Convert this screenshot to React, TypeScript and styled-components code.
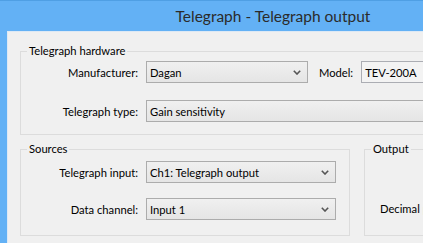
import React from "react";
import styled, {createGlobalStyle} from "styled-components";

const GlobalStyle = createGlobalStyle`
  html, body {
    margin: 0;
    padding: 0;
    background: #63b1f5;
  }
  body {
    font-family: Lato, "Liberation Sans", sans-serif;
    font-size: 11.2px;
    color: #000;
  }
`

const Viewport = styled.div`
  width: 423px;
  height: 243px;
  overflow: hidden;
`

const Window = styled.div`
  width: 546px;
  height: 420px;
  box-sizing: border-box;
  display: flex;
  flex-direction: column;
  padding: 0 7px 7px;
  background: #63b1f5;
  border-top: 1px solid #4f9fe4;
`

const TitleBar = styled.div`
  height: 30px;
  display: flex;
  align-items: center;
  justify-content: center;
  font-size: 15.5px;
  color: #2b2b2b;
`

const Client = styled.div`
  flex: 1;
  display: flex;
  flex-direction: column;
  gap: 7px;
  padding: 12px 12px 0;
  background: #f0f0f0;
  border-top: 1px solid #dde9f5;
  border-left: 1px solid #dde9f5;
`

const Group = styled.fieldset<{ $width?: number; $grow?: boolean }>`
  margin: 0;
  padding: 0;
  min-width: 0;
  border: 1px solid #dcdcdc;
  box-sizing: border-box;
  flex: ${p => p.$grow ? 1 : 'none'};
  ${p => p.$width ? `width: ${p.$width}px;` : ``}
`

const Caption = styled.legend`
  margin-left: 6px;
  padding: 0 2px;
  line-height: 14px;
`

const Form = styled.div<{ $gap: number; $top: number; $bottom: number }>`
  display: grid;
  grid-template-columns: 117px 1fr;
  column-gap: 8px;
  row-gap: ${p => p.$gap}px;
  align-items: center;
  padding: ${p => p.$top}px 13px ${p => p.$bottom}px 0;
`

const Label = styled.div`
  text-align: right;
  white-space: nowrap;
`

const Line = styled.div`
  display: flex;
  align-items: center;
`

const Combo = styled.div<{ $width?: number }>`
  height: 22px;
  box-sizing: border-box;
  display: flex;
  align-items: center;
  justify-content: space-between;
  padding: 0 6px 0 3px;
  border: 1px solid #acacac;
  background: linear-gradient(#f0f0f0, #e5e5e5);
  white-space: nowrap;
  ${p => p.$width ? `width: ${p.$width}px; flex: none;` : ``}
`

const InlineLabel = styled.span`
  margin: 0 8px 0 11px;
  white-space: nowrap;
`

const TextBox = styled.div`
  flex: 1;
  height: 22px;
  box-sizing: border-box;
  display: flex;
  align-items: center;
  padding: 0 3px;
  border: 1px solid #abadb3;
  background: #f3f3f3;
`

const BottomRow = styled.div`
  display: flex;
  gap: 14px;
`

const OutputBody = styled.div`
  display: flex;
  align-items: center;
  height: 22px;
  padding: 41px 0 16px 15px;
  gap: 8px;
`

const Chevron = () => (
    <svg width="8" height="5" viewBox="0 0 8 5">
        <path d="M0.8 0.8 L4 4 L7.2 0.8" fill="none" stroke="#555" strokeWidth="1.6"/>
    </svg>
)

const ComboBox = ({value, width}: { value: string; width?: number }) => (
    <Combo $width={width}>
        <span>{value}</span>
        <Chevron/>
    </Combo>
)

export default function App() {
    return (
        <Viewport>
            <GlobalStyle/>
            <Window>
                <TitleBar>Telegraph - Telegraph output</TitleBar>
                <Client>
                    <Group>
                        <Caption>Telegraph hardware</Caption>
                        <Form $gap={17} $top={3} $bottom={12}>
                            <Label>Manufacturer:</Label>
                            <Line>
                                <ComboBox value="Dagan" width={162}/>
                                <InlineLabel>Model:</InlineLabel>
                                <TextBox>TEV-200A</TextBox>
                            </Line>
                            <Label>Telegraph type:</Label>
                            <ComboBox value="Gain sensitivity"/>
                        </Form>
                    </Group>
                    <BottomRow>
                        <Group $width={330}>
                            <Caption>Sources</Caption>
                            <Form $gap={15} $top={5} $bottom={15}>
                                <Label>Telegraph input:</Label>
                                <ComboBox value="Ch1: Telegraph output"/>
                                <Label>Data channel:</Label>
                                <ComboBox value="Input 1"/>
                            </Form>
                        </Group>
                        <Group $grow>
                            <Caption>Output</Caption>
                            <OutputBody>
                                <span>Decimal places:</span>
                                <TextBox>2</TextBox>
                            </OutputBody>
                        </Group>
                    </BottomRow>
                </Client>
            </Window>
        </Viewport>
    )
}
